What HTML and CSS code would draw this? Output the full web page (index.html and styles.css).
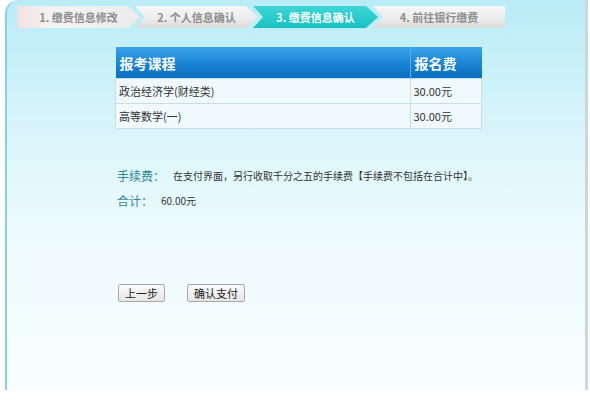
FILE: index.html
```html
<!DOCTYPE html>
<html lang="zh-CN">
<head>
<meta charset="utf-8">
<title>缴费信息确认</title>
<link rel="stylesheet" href="styles.css">
</head>
<body>
<div class="frame">
  <div class="steps">
    <div class="step step-first">1. 缴费信息修改</div>
    <div class="step step-second">2. 个人信息确认</div>
    <div class="step step-active">3. 缴费信息确认</div>
    <div class="step step-last">4. 前往银行缴费</div>
  </div>

  <table class="courses">
    <thead>
      <tr><th class="c-name">报考课程</th><th class="c-fee">报名费</th></tr>
    </thead>
    <tbody>
      <tr><td>政治经济学(财经类)</td><td>30.00元</td></tr>
      <tr><td>高等数学(一)</td><td>30.00元</td></tr>
    </tbody>
  </table>

  <div class="summary">
    <div class="line"><span class="label">手续费：</span><span class="val">在支付界面，另行收取千分之五的手续费【手续费不包括在合计中】。</span></div>
    <div class="line"><span class="label">合计：</span><span class="val">60.00元</span></div>
  </div>

  <div class="actions">
    <button class="btn">上一步</button>
    <button class="btn">确认支付</button>
  </div>
</div>
</body>
</html>
```

FILE: styles.css
```css
html, body {
  margin: 0;
  padding: 0;
  background: #ffffff;
  font-family: "Noto Sans CJK SC", "DejaVu Sans", sans-serif;
}

.frame {
  margin-left: 5px;
  width: 583px;
  height: 390px;
  box-sizing: border-box;
  border-left: 2px solid #86d3d9;
  border-right: 3px solid #cfd6d8;
  border-top-left-radius: 14px;
  background: linear-gradient(to bottom, #b9ecf7 0%, #d6f4fa 30%, #eefbfd 60%, #f8feff 100%);
  overflow: hidden;
}

.steps {
  display: flex;
  margin: 6px 0 0 10px;
  height: 22px;
}

.step {
  height: 22px;
  margin-right: -5px;
  display: flex;
  align-items: center;
  justify-content: center;
  font-size: 11px;
  font-weight: bold;
  color: #8e8e8e;
  background: linear-gradient(to bottom, #f7f7f7 0%, #ececec 55%, #dcdcdc 100%);
  clip-path: polygon(0 0, calc(100% - 12px) 0, 100% 50%, calc(100% - 12px) 100%, 0 100%, 10px 50%);
}

.step-first {
  width: 123px;
  clip-path: polygon(0 0, calc(100% - 12px) 0, 100% 50%, calc(100% - 12px) 100%, 0 100%);
  background: linear-gradient(to right, #f3e2e4 0%, #f3f3f3 30%, #ececec 100%);
}

.step-second { width: 123px; }

.step-active {
  width: 125px;
  color: #ffffff;
  background: linear-gradient(to bottom, #3fd6d6 0%, #17c2c4 100%);
}

.step-last {
  width: 132px;
  clip-path: polygon(0 0, 100% 0, 100% 100%, 0 100%, 10px 50%);
}

.courses {
  margin: 19px 0 0 108px;
  width: 367px;
  border-collapse: collapse;
  font-size: 11px;
  color: #333333;
}

.courses th {
  height: 31px;
  padding: 0 4px;
  text-align: left;
  font-size: 14px;
  font-weight: bold;
  color: #ffffff;
  background: linear-gradient(to bottom, #3aa3ea 0%, #1a86d6 50%, #0a6fc0 100%);
  border-left: 1px solid #5bb2ea;
}

.courses th.c-name { border-left: 0; }
.courses .c-fee { width: 63px; }

.courses td {
  height: 24px;
  padding: 0 3px;
  background: #f0fafd;
  border: 1px solid #c8dde6;
}

.summary {
  margin: 34px 0 0 110px;
}

.line {
  display: flex;
  align-items: center;
  height: 25px;
}

.label {
  font-size: 12px;
  color: #2b8a96;
  margin-right: 8px;
}

.val {
  font-size: 10px;
  color: #333333;
}

.actions {
  margin: 71px 0 0 111px;
  display: flex;
  gap: 22px;
}

.btn {
  height: 18px;
  padding: 0 6px;
  font-family: "Noto Sans CJK SC", sans-serif;
  font-size: 11px;
  line-height: 14px;
  color: #222222;
  background: linear-gradient(to bottom, #fafafa 0%, #e6e6e6 100%);
  border: 1px solid #a8a8a8;
  border-radius: 2px;
}
```
